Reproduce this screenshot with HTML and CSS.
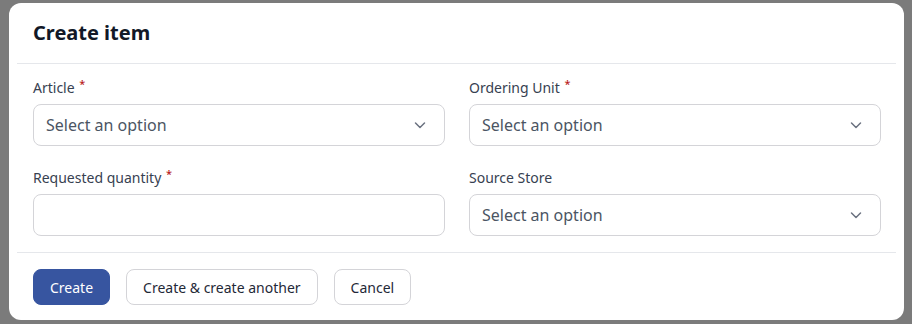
FILE: index.html
```html
<!DOCTYPE html>
<html lang="en">
<head>
  <meta charset="UTF-8" />
  <title>Create item</title>
  <link rel="stylesheet" href="styles.css">
</head>
<body>
  <div class="backdrop">
    <div class="modal">
      <div class="modal-header">
        <h2 class="modal-title">Create item</h2>
      </div>
      <div class="divider"></div>

      <form class="modal-body">
        <div class="field">
          <label class="field-label">Article <sup class="req">*</sup></label>
          <div class="select">
            <span>Select an option</span>
            <svg class="chevron" viewBox="0 0 20 20" width="20" height="20"><path d="M5.5 8l4.5 4.5L14.5 8" fill="none" stroke="currentColor" stroke-width="1.5" stroke-linecap="round" stroke-linejoin="round"/></svg>
          </div>
        </div>

        <div class="field">
          <label class="field-label">Ordering Unit <sup class="req">*</sup></label>
          <div class="select">
            <span>Select an option</span>
            <svg class="chevron" viewBox="0 0 20 20" width="20" height="20"><path d="M5.5 8l4.5 4.5L14.5 8" fill="none" stroke="currentColor" stroke-width="1.5" stroke-linecap="round" stroke-linejoin="round"/></svg>
          </div>
        </div>

        <div class="field">
          <label class="field-label">Requested quantity <sup class="req">*</sup></label>
          <input class="text-input" type="text" />
        </div>

        <div class="field">
          <label class="field-label">Source Store</label>
          <div class="select">
            <span>Select an option</span>
            <svg class="chevron" viewBox="0 0 20 20" width="20" height="20"><path d="M5.5 8l4.5 4.5L14.5 8" fill="none" stroke="currentColor" stroke-width="1.5" stroke-linecap="round" stroke-linejoin="round"/></svg>
          </div>
        </div>
      </form>

      <div class="divider"></div>
      <div class="modal-footer">
        <button class="btn btn-primary">Create</button>
        <button class="btn btn-outline">Create &amp; create another</button>
        <button class="btn btn-outline">Cancel</button>
      </div>
    </div>
  </div>
</body>
</html>
```

FILE: styles.css
```css
* {
  box-sizing: border-box;
}

body {
  margin: 0;
  font-family: 'Noto Sans', 'Open Sans', sans-serif;
  background: #7b7b7b;
  color: #1f2937;
  height: 324px;
  overflow: hidden;
}

.backdrop {
  padding: 3px 8px 0 9px;
}

.modal {
  width: 895px;
  height: 317px;
  background: #ffffff;
  border-radius: 12px;
  display: flex;
  flex-direction: column;
}

.modal-header {
  padding: 16px 24px;
}

.modal-title {
  margin: 0;
  font-size: 20px;
  line-height: 28px;
  font-weight: 700;
  color: #111827;
}

.divider {
  height: 1px;
  margin: 0 8px;
  background: #e5e7eb;
}

.modal-body {
  display: grid;
  grid-template-columns: 1fr 1fr;
  column-gap: 24px;
  row-gap: 22px;
  padding: 14px 23px 16px 24px;
}

.field {
  display: flex;
  flex-direction: column;
  gap: 6px;
}

.field-label {
  font-size: 14px;
  line-height: 20px;
  font-weight: 400;
  color: #374151;
}

.req {
  color: #b91c1c;
  font-size: 11px;
  font-weight: 500;
  vertical-align: 5px;
  line-height: 0;
  margin-left: 1px;
}

.select,
.text-input {
  height: 42px;
  border: 1px solid #d4d4d8;
  border-radius: 8px;
  background: #fff;
}

.select {
  display: flex;
  align-items: center;
  justify-content: space-between;
  padding: 0 12px;
  font-size: 16px;
  color: #4b5563;
}

.chevron {
  color: #6b7280;
  margin-right: 2px;
}

.text-input {
  width: 100%;
  font: inherit;
  outline: none;
}

.modal-footer {
  display: flex;
  gap: 16px;
  padding: 16px 24px 15px;
}

.btn {
  height: 36px;
  padding: 0 16px;
  border-radius: 8px;
  font-family: inherit;
  font-size: 14px;
  font-weight: 400;
  cursor: pointer;
}

.btn-primary {
  background: #3755a0;
  border: 1px solid #3755a0;
  color: #ffffff;
}

.btn-outline {
  background: #ffffff;
  border: 1px solid #d4d4d8;
  color: #1f2937;
}
```
